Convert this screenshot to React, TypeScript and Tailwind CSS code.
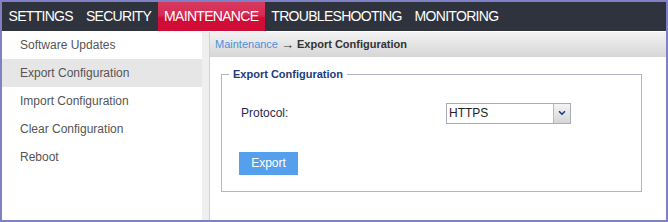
import { ChevronDown } from "lucide-react";

const navItems = ["SETTINGS", "SECURITY", "MAINTENANCE", "TROUBLESHOOTING", "MONITORING"];
const menuItems = [
  "Software Updates",
  "Export Configuration",
  "Import Configuration",
  "Clear Configuration",
  "Reboot",
];

export default function App() {
  return (
    <div className="w-[668px] h-[222px] border-2 border-[#8080c4] bg-white flex flex-col overflow-hidden font-['Liberation_Sans',Arial,sans-serif]">
      {/* Top nav */}
      <nav className="h-[29px] shrink-0 bg-[#2e333e] flex items-stretch">
        {navItems.map((item) => (
          <div
            key={item}
            className={`px-[6.5px] flex items-center text-[14px] tracking-[-0.7px] text-white ${
              item === "MAINTENANCE"
                ? "bg-[linear-gradient(#d8395f_0%,#d42c55_45%,#cf0d37_55%,#cf0d37_100%)]"
                : ""
            }`}
          >
            {item}
          </div>
        ))}
      </nav>

      <div className="flex flex-1 min-h-0">
        {/* Sidebar */}
        <aside className="w-[200px] shrink-0 flex flex-col">
          {menuItems.map((item) => (
            <div
              key={item}
              className={`h-[28px] pl-[18px] flex items-center text-[12px] text-[#555] ${
                item === "Export Configuration" ? "bg-[#e5e6e5]" : ""
              }`}
            >
              {item}
            </div>
          ))}
        </aside>

        <div className="flex flex-1 mt-[1px]">
          {/* Gutter */}
          <div className="w-[8px] shrink-0 bg-[#efefef] border-r border-[#d2d2d2]" />

          {/* Main */}
          <main className="flex-1 flex flex-col">
            <div className="h-[25px] pl-[5px] flex items-center gap-[3px] bg-gradient-to-b from-[#f3f3f3] to-[#d6d6d6] text-[11px]">
              <span className="text-[#4a90dc]">Maintenance</span>
              <span className="text-[#333] text-[13px] leading-none">→</span>
              <span className="font-bold text-[#333]">Export Configuration</span>
            </div>

            <fieldset className="ml-[11px] mt-[9px] w-[421px] h-[126px] border border-[#b3b4c8] px-0">
              <legend className="ml-[7px] px-[4px] text-[11px] font-bold text-[#1d3c7c]">
                Export Configuration
              </legend>

              <div className="flex items-center mt-[20px] pl-[19px]">
                <span className="w-[205px] text-[12px] text-[#2a2a48]">Protocol:</span>
                <div className="w-[125px] h-[21px] border border-[#a7adb8] flex items-stretch bg-white">
                  <span className="flex-1 pl-[2px] flex items-center text-[12px] text-[#222]">HTTPS</span>
                  <div className="w-[17px] border-l border-[#b8bcc4] bg-gradient-to-b from-[#f4f4f4] to-[#d6d6d6] flex items-center justify-center">
                    <ChevronDown className="w-[10px] h-[10px] text-[#1f3f86]" strokeWidth={4} />
                  </div>
                </div>
              </div>

              <button className="mt-[28px] ml-[17px] w-[59px] h-[23px] bg-[#55a0ec] text-white text-[12px] flex items-center justify-center">
                Export
              </button>
            </fieldset>
          </main>
        </div>
      </div>
    </div>
  );
}
